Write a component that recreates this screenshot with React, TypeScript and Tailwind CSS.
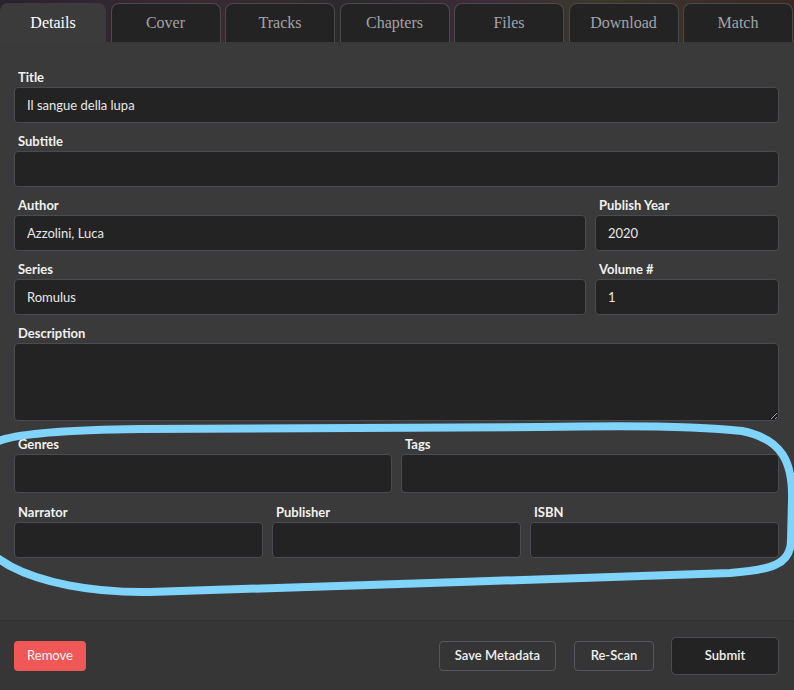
import { useState } from "react";

const TABS = ["Details", "Cover", "Tracks", "Chapters", "Files", "Download", "Match"];

const Field = ({
  label,
  value = "",
  tall = false,
}: {
  label: string;
  value?: string;
  tall?: boolean;
}) => (
  <div className="flex flex-col min-w-0">
    <label className="block pl-[4px] mb-[2px] text-[13px] leading-[16px] font-bold text-[#f0f0f0]">
      {label}
    </label>
    <input
      defaultValue={value}
      className={`w-full ${tall ? "h-[39px]" : "h-[36px]"} rounded-[4px] border border-[#4a4c53] bg-[#232323] px-[12px] text-[13px] text-[#e8e8e8] outline-none`}
    />
  </div>
);

const App = () => {
  const [active, setActive] = useState("Details");

  return (
    <div className="relative w-[794px] h-[690px] overflow-hidden bg-[#373737] font-['Lato','Liberation_Sans',sans-serif]">
      {/* tab strip */}
      <div className="flex items-end gap-[4.5px] h-[42px] bg-[linear-gradient(90deg,#2a2230_0%,#3a2a32_25%,#2b2a2c_45%,#3d2a3a_60%,#3a382c_75%,#3b2626_100%)]">
        {TABS.map((tab) => (
          <button
            key={tab}
            onClick={() => setActive(tab)}
            className={`h-[39px] shrink-0 rounded-t-[8px] font-['Liberation_Serif',serif] text-[16px] ${
              tab === "Details" ? "w-[106px]" : "w-[110px]"
            } ${
              active === tab
                ? "bg-[#3b3b3b] text-white"
                : "bg-[#232323] text-[#a3a3ab] border border-b-0 border-[#4a4a4a]"
            }`}
          >
            {tab}
          </button>
        ))}
      </div>

      {/* form panel */}
      <div className="bg-[#3a3a3a] pl-[14px] pr-[15px] pt-[27px] h-[579px] border-b border-[#2e2e2e]">
        <div className="flex flex-col gap-[10px]">
          <Field label="Title" value="Il sangue della lupa" />
          <Field label="Subtitle" />
          <div className="grid grid-cols-[1fr_184px] gap-[9px]">
            <Field label="Author" value="Azzolini, Luca" />
            <Field label="Publish Year" value="2020" />
          </div>
          <div className="grid grid-cols-[1fr_184px] gap-[9px]">
            <Field label="Series" value="Romulus" />
            <Field label="Volume #" value="1" />
          </div>
          <div className="flex flex-col">
            <label className="block pl-[4px] mb-[2px] text-[13px] leading-[16px] font-bold text-[#f0f0f0]">
              Description
            </label>
            <textarea className="w-full h-[78px] rounded-[4px] border border-[#4a4c53] bg-[#232323] px-[12px] py-[8px] text-[13px] text-[#e8e8e8] outline-none" />
          </div>
          <div className="grid grid-cols-2 gap-[9px] mt-[5px]">
            <Field label="Genres" tall />
            <Field label="Tags" tall />
          </div>
          <div className="grid grid-cols-3 gap-[9px] mt-[1px]">
            <Field label="Narrator" />
            <Field label="Publisher" />
            <Field label="ISBN" />
          </div>
        </div>
      </div>

      {/* footer */}
      <div className="flex items-center h-[69px] pl-[14px] pr-[15px] bg-[#363636]">
        <button className="h-[30px] w-[72px] rounded-[4px] bg-[#f05858] text-[13px] text-[#fff4f4]">
          Remove
        </button>
        <div className="flex-1" />
        <button className="h-[30px] w-[117px] rounded-[4px] border border-[#55575e] bg-[#353535] text-[13px] font-semibold text-[#f0f0f0]">
          Save Metadata
        </button>
        <button className="ml-[18px] h-[30px] w-[80px] rounded-[4px] border border-[#55575e] bg-[#353535] text-[13px] font-semibold text-[#f0f0f0]">
          Re-Scan
        </button>
        <button className="ml-[17px] h-[38px] w-[108px] rounded-[5px] border border-[#4a4c53] bg-[#232323] text-[13px] font-semibold text-[#f0f0f0]">
          Submit
        </button>
      </div>

      {/* hand-drawn annotation */}
      <svg
        className="pointer-events-none absolute left-0 top-0"
        width="794"
        height="690"
        viewBox="0 0 794 690"
        fill="none"
      >
        <path
          d="M -6 443 C 10 434, 60 430, 140 429 L 540 427 C 640 425, 700 426, 742 431 C 782 439, 793 462, 792 500 L 791 540 C 791 564, 772 570, 730 573 L 460 582 L 150 592 C 90 593, 40 582, 10 566 L -6 556"
          stroke="#80d4fb"
          strokeWidth="8"
          strokeLinecap="round"
          strokeLinejoin="round"
        />
      </svg>
    </div>
  );
};

export default App;
